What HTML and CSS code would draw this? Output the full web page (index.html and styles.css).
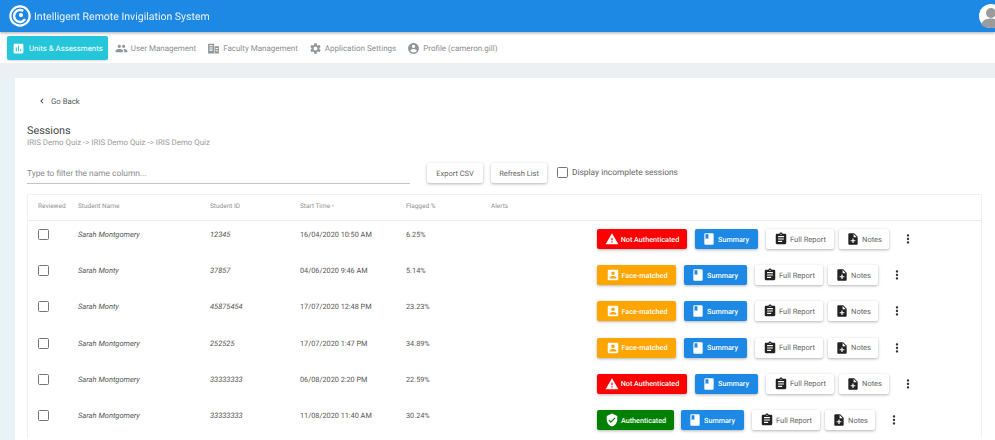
FILE: index.html
```html
<!DOCTYPE html>
<html lang="en">
<head>
<meta charset="utf-8">
<title>Sessions</title>
<link rel="stylesheet" href="styles.css">
</head>
<body>
<svg class="defs" width="0" height="0" aria-hidden="true">
  <symbol id="i-chart" viewBox="0 0 24 24"><path d="M19 3H5c-1.1 0-2 .9-2 2v14c0 1.1.9 2 2 2h14c1.1 0 2-.9 2-2V5c0-1.1-.9-2-2-2zM9 17H7v-7h2v7zm4 0h-2V7h2v10zm4 0h-2v-4h2v4z"/></symbol>
  <symbol id="i-people" viewBox="0 0 24 24"><path d="M16 11c1.66 0 2.99-1.34 2.99-3S17.66 5 16 5c-1.66 0-3 1.34-3 3s1.34 3 3 3zm-8 0c1.66 0 2.99-1.34 2.99-3S9.66 5 8 5C6.34 5 5 6.34 5 8s1.34 3 3 3zm0 2c-2.33 0-7 1.17-7 3.5V19h14v-2.5c0-2.33-4.67-3.5-7-3.5zm8 0c-.29 0-.62.02-.97.05 1.16.84 1.97 1.97 1.97 3.45V19h6v-2.5c0-2.33-4.67-3.5-7-3.5z"/></symbol>
  <symbol id="i-building" viewBox="0 0 24 24"><path d="M2 3h11v18H2V3zm2.500 3v2h6V6h-6zm0 4v2h6v-2h-6zm0 4v2h6v-2h-6zM14 8h8v13h-8V8zm2 3v2h4v-2h-4zm0 4v2h4v-2h-4z"/></symbol>
  <symbol id="i-gear" viewBox="0 0 24 24"><path d="M19.14 12.94c.04-.3.06-.61.06-.94 0-.32-.02-.64-.07-.94l2.03-1.58c.18-.14.23-.41.12-.61l-1.92-3.32c-.12-.22-.37-.29-.59-.22l-2.39.96c-.5-.38-1.03-.7-1.62-.94l-.36-2.54c-.04-.24-.24-.41-.48-.41h-3.84c-.24 0-.43.17-.47.41l-.36 2.54c-.59.24-1.13.57-1.62.94l-2.39-.96c-.22-.08-.47 0-.59.22L2.74 8.87c-.12.21-.08.47.12.61l2.03 1.58c-.05.3-.09.63-.09.94s.02.64.07.94l-2.03 1.58c-.18.14-.23.41-.12.61l1.92 3.32c.12.22.37.29.59.22l2.39-.96c.5.38 1.03.7 1.62.94l.36 2.54c.05.24.24.41.48.41h3.84c.24 0 .44-.17.47-.41l.36-2.54c.59-.24 1.13-.56 1.62-.94l2.39.96c.22.08.47 0 .59-.22l1.92-3.32c.12-.22.07-.47-.12-.61l-2.01-1.58zM12 15.600c-1.980 0-3.600-1.620-3.600-3.600s1.620-3.600 3.600-3.600 3.600 1.620 3.600 3.600-1.620 3.600-3.600 3.600z"/></symbol>
  <symbol id="i-account" viewBox="0 0 24 24"><path d="M12 2C6.480 2 2 6.480 2 12s4.480 10 10 10 10-4.480 10-10S17.520 2 12 2zm0 3c1.660 0 3 1.340 3 3s-1.340 3-3 3-3-1.340-3-3 1.340-3 3-3zm0 14.200c-2.500 0-4.710-1.280-6-3.220.03-1.990 4-3.080 6-3.080 1.990 0 5.970 1.090 6 3.080-1.290 1.940-3.500 3.220-6 3.220z"/></symbol>
  <symbol id="i-back" viewBox="0 0 24 24"><path d="M15.410 7.410L14 6l-6 6 6 6 1.410-1.410L10.830 12z"/></symbol>
  <symbol id="i-warn" viewBox="0 0 24 24"><path d="M1 21h22L12 2 1 21zm12-3h-2v-2h2v2zm0-4h-2v-4h2v4z"/></symbol>
  <symbol id="i-face" viewBox="0 0 24 24"><path d="M3 5v14c0 1.100.890 2 2 2h14c1.100 0 2-.9 2-2V5c0-1.100-.9-2-2-2H5c-1.110 0-2 .9-2 2zm12 4c0 1.660-1.340 3-3 3s-3-1.340-3-3 1.340-3 3-3 3 1.340 3 3zm-9 8c0-2 4-3.100 6-3.100s6 1.100 6 3.100v1H6v-1z"/></symbol>
  <symbol id="i-shield" viewBox="0 0 24 24"><path d="M12 1L3 5v6c0 5.550 3.840 10.740 9 12 5.160-1.260 9-6.450 9-12V5l-9-4zm-2 16l-4-4 1.410-1.410L10 14.170l6.590-6.590L18 9l-8 8z"/></symbol>
  <symbol id="i-book" viewBox="0 0 24 24"><path d="M18 2H6c-1.100 0-2 .9-2 2v16c0 1.100.9 2 2 2h12c1.100 0 2-.9 2-2V4c0-1.100-.9-2-2-2zM6 4h5v8l-2.500-1.500L6 12V4z"/></symbol>
  <symbol id="i-report" viewBox="0 0 24 24"><path d="M19 3h-4.180C14.400 1.840 13.300 1 12 1c-1.300 0-2.400.84-2.820 2H5c-1.100 0-2 .9-2 2v14c0 1.100.9 2 2 2h14c1.100 0 2-.9 2-2V5c0-1.100-.9-2-2-2zm-7 0c.55 0 1 .45 1 1s-.45 1-1 1-1-.45-1-1 .45-1 1-1zm2 14H7v-2h7v2zm3-4H7v-2h10v2zm0-4H7V7h10v2z"/></symbol>
  <symbol id="i-note" viewBox="0 0 24 24"><path d="M14 2H6c-1.100 0-1.990.9-1.990 2L4 20c0 1.100.890 2 1.990 2H18c1.100 0 2-.9 2-2V8l-6-6zm2 14h-3v3h-2v-3H8v-2h3v-3h2v3h3v2zm-3-7V3.500L18.500 9H13z"/></symbol>
  <symbol id="i-more" viewBox="0 0 24 24"><path d="M12 8c1.100 0 2-.9 2-2s-.9-2-2-2-2 .9-2 2 .9 2 2 2zm0 2c-1.100 0-2 .9-2 2s.9 2 2 2 2-.9 2-2-.9-2-2-2zm0 6c-1.100 0-2 .9-2 2s.9 2 2 2 2-.9 2-2-.9-2-2-2z"/></symbol>
</svg>

<header class="topbar">
  <svg class="logo" viewBox="0 0 24 24" aria-hidden="true">
    <circle cx="12" cy="12" r="10.500" class="logo-ring"/>
    <path d="M17.500 15.500A6.500 6.500 0 1 1 15.500 6.500" class="logo-arc"/>
    <circle cx="13" cy="11" r="2.300" class="logo-dot"/>
  </svg>
  <span class="brand">Intelligent Remote Invigilation System</span>
  <span class="avatar">
    <svg viewBox="0 0 24 24" aria-hidden="true">
      <circle cx="12" cy="12" r="12" class="avatar-bg"/>
      <circle cx="12" cy="9" r="5" class="avatar-fg"/>
      <path d="M2.500 21c0-4.500 5-6.500 9.500-6.500s9.500 2 9.500 6.500c-2 2-5.500 3-9.500 3s-7.500-1-9.500-3z" class="avatar-fg"/>
    </svg>
  </span>
</header>

<nav class="tabs">
  <a class="tab active"><svg class="ico"><use href="#i-chart"/></svg>Units &amp; Assessments</a>
  <a class="tab"><svg class="ico"><use href="#i-people"/></svg>User Management</a>
  <a class="tab"><svg class="ico"><use href="#i-building"/></svg>Faculty Management</a>
  <a class="tab"><svg class="ico"><use href="#i-gear"/></svg>Application Settings</a>
  <a class="tab"><svg class="ico"><use href="#i-account"/></svg>Profile (cameron.gill)</a>
</nav>

<main class="page">
  <section class="card">
    <a class="back"><svg class="back-ico"><use href="#i-back"/></svg>Go Back</a>
    <h1 class="title">Sessions</h1>
    <p class="crumbs">IRIS Demo Quiz -&gt; IRIS Demo Quiz -&gt; IRIS Demo Quiz</p>

    <div class="toolbar">
      <div class="filter">Type to filter the name column...</div>
      <button class="btn tool">Export CSV</button>
      <button class="btn tool">Refresh List</button>
      <label class="incomplete"><span class="box"></span>Display incomplete sessions</label>
    </div>

    <div class="table">
      <div class="row head">
        <span>Reviewed</span><span>Student Name</span><span>Student ID</span>
        <span>Start Time <i class="sort">^</i></span><span>Flagged %</span><span>Alerts</span>
      </div>

      <div class="row body">
        <span class="cell"><span class="box"></span></span><span class="cell it">Sarah Montgomery</span><span class="cell it">12345</span><span class="cell">16/04/2020 10:50 AM</span><span class="cell">6.25%</span><span></span>
        <div class="actions">
          <span class="btn st red"><svg class="bi"><use href="#i-warn"/></svg>Not Authenticated</span>
          <span class="btn st blue"><svg class="bi"><use href="#i-book"/></svg>Summary</span>
          <span class="btn rep"><svg class="bi"><use href="#i-report"/></svg>Full Report</span>
          <span class="btn nts"><svg class="bi"><use href="#i-note"/></svg>Notes</span>
          <svg class="more"><use href="#i-more"/></svg>
        </div>
      </div>

      <div class="row body">
        <span class="cell"><span class="box"></span></span><span class="cell it">Sarah Monty</span><span class="cell it">37857</span><span class="cell">04/06/2020 9:46 AM</span><span class="cell">5.14%</span><span></span>
        <div class="actions">
          <span class="btn st amber"><svg class="bi"><use href="#i-face"/></svg>Face-matched</span>
          <span class="btn st blue"><svg class="bi"><use href="#i-book"/></svg>Summary</span>
          <span class="btn rep"><svg class="bi"><use href="#i-report"/></svg>Full Report</span>
          <span class="btn nts"><svg class="bi"><use href="#i-note"/></svg>Notes</span>
          <svg class="more"><use href="#i-more"/></svg>
        </div>
      </div>

      <div class="row body">
        <span class="cell"><span class="box"></span></span><span class="cell it">Sarah Monty</span><span class="cell it">45875454</span><span class="cell">17/07/2020 12:48 PM</span><span class="cell">23.23%</span><span></span>
        <div class="actions">
          <span class="btn st amber"><svg class="bi"><use href="#i-face"/></svg>Face-matched</span>
          <span class="btn st blue"><svg class="bi"><use href="#i-book"/></svg>Summary</span>
          <span class="btn rep"><svg class="bi"><use href="#i-report"/></svg>Full Report</span>
          <span class="btn nts"><svg class="bi"><use href="#i-note"/></svg>Notes</span>
          <svg class="more"><use href="#i-more"/></svg>
        </div>
      </div>

      <div class="row body">
        <span class="cell"><span class="box"></span></span><span class="cell it">Sarah Montgomery</span><span class="cell it">252525</span><span class="cell">17/07/2020 1:47 PM</span><span class="cell">34.89%</span><span></span>
        <div class="actions">
          <span class="btn st amber"><svg class="bi"><use href="#i-face"/></svg>Face-matched</span>
          <span class="btn st blue"><svg class="bi"><use href="#i-book"/></svg>Summary</span>
          <span class="btn rep"><svg class="bi"><use href="#i-report"/></svg>Full Report</span>
          <span class="btn nts"><svg class="bi"><use href="#i-note"/></svg>Notes</span>
          <svg class="more"><use href="#i-more"/></svg>
        </div>
      </div>

      <div class="row body">
        <span class="cell"><span class="box"></span></span><span class="cell it">Sarah Montgomery</span><span class="cell it">33333333</span><span class="cell">06/08/2020 2:20 PM</span><span class="cell">22.59%</span><span></span>
        <div class="actions">
          <span class="btn st red"><svg class="bi"><use href="#i-warn"/></svg>Not Authenticated</span>
          <span class="btn st blue"><svg class="bi"><use href="#i-book"/></svg>Summary</span>
          <span class="btn rep"><svg class="bi"><use href="#i-report"/></svg>Full Report</span>
          <span class="btn nts"><svg class="bi"><use href="#i-note"/></svg>Notes</span>
          <svg class="more"><use href="#i-more"/></svg>
        </div>
      </div>

      <div class="row body">
        <span class="cell"><span class="box"></span></span><span class="cell it">Sarah Montgomery</span><span class="cell it">33333333</span><span class="cell">11/08/2020 11:40 AM</span><span class="cell">30.24%</span><span></span>
        <div class="actions">
          <span class="btn st green"><svg class="bi"><use href="#i-shield"/></svg>Authenticated</span>
          <span class="btn st blue"><svg class="bi"><use href="#i-book"/></svg>Summary</span>
          <span class="btn rep"><svg class="bi"><use href="#i-report"/></svg>Full Report</span>
          <span class="btn nts"><svg class="bi"><use href="#i-note"/></svg>Notes</span>
          <svg class="more"><use href="#i-more"/></svg>
        </div>
      </div>
    </div>
  </section>
</main>
</body>
</html>
```

FILE: styles.css
```css
html, body { margin: 0; height: 440px; overflow: hidden; }
body { font-family: Roboto, "Liberation Sans", sans-serif; background: #fff; color: #444; text-rendering: geometricPrecision; filter: blur(.3px); }
.defs { position: absolute; }

.topbar { height: 32px; background: #1e88e5; display: flex; align-items: center; padding-left: 9px; box-shadow: 0 1px 3px rgba(0,0,0,.35); position: relative; z-index: 2; }
.logo { width: 22px; height: 22px; margin-right: 3px; flex: none; }
.logo-ring { fill: none; stroke: #fff; stroke-width: 2.4; }
.logo-arc { fill: none; stroke: #fff; stroke-width: 2.6; }
.logo-dot { fill: #fff; }
.brand { color: #eaf3fc; font-size: 10.500px; white-space: nowrap; }
.avatar { margin-left: auto; margin-right: -8px; width: 24px; height: 24px; flex: none; }
.avatar svg { width: 24px; height: 24px; display: block; }
.avatar-bg { fill: #fff; }
.avatar-fg { fill: #9b9b9b; }

.tabs { height: 30px; background: #fff; display: flex; align-items: center; padding: 1px 0 0 7px; }
.tab { display: flex; align-items: center; font-size: 8px; color: #8a8f93; height: 24px; padding: 0 5px 0 6px; white-space: nowrap; }
.tab .ico { width: 13px; height: 13px; margin-right: 3px; fill: #90979c; flex: none; }
.tab.active { background: #26c6da; color: #fff; font-size: 7.800px; border-radius: 2px; padding: 0 5px; box-shadow: 0 1px 2px rgba(0,0,0,.15); margin-right: 1px; }
.tab.active .ico { fill: #fff; margin-right: 4px; }

.page { background: linear-gradient(#ecf0f3 0, #ecf0f3 15px, #e8f3f8 15px); padding: 15px 0 0 15px; height: 377px; }
.card { background: #fff; height: 400px; padding: 17px 13px 0 12px; }

.back { display: flex; align-items: center; font-size: 7.800px; color: #555; height: 12px; padding-left: 10px; }
.back-ico { width: 10px; height: 10px; fill: #333; margin-right: 4px; flex: none; }
.title { font-weight: 400; font-size: 10.800px; line-height: 14px; color: #444; margin: 17px 0 0; }
.crumbs { font-size: 7.900px; line-height: 10px; color: #9a9a9a; margin: 0; }

.toolbar { display: flex; align-items: flex-start; margin-top: 15px; }
.filter { width: 383px; height: 21px; padding-top: 2px; line-height: 19px; box-sizing: border-box; border-bottom: 1px solid #c4c4c4; font-size: 8.400px; color: #8b8b8b; margin-right: 17px; }
.btn { display: inline-flex; align-items: center; justify-content: center; box-sizing: border-box; height: 20px; font-family: inherit; font-size: 7.500px; border: 0; border-radius: 2px; background: #fff; color: #666; box-shadow: 0 1px 3px rgba(0,0,0,.3); white-space: nowrap; padding: 0; text-rendering: geometricPrecision; }
.tool { width: 56px; margin-right: 8px; }
.incomplete { display: flex; align-items: center; height: 19px; font-size: 8.400px; color: #666; margin-left: 2px; white-space: nowrap; }
.box { display: block; width: 9px; height: 9px; border: 1.200px solid #777; border-radius: 1.500px; margin-right: 4px; }

.table { width: 955px; margin-top: 10px; border: 1px solid #f1f1f1; border-bottom: 0; box-sizing: border-box; }
.row { display: grid; grid-template-columns: 50px 132px 90px 106px 85px 106px 1fr; }
.row > span:first-child { padding-left: 10px; }
.head { box-sizing: content-box; height: 21px; padding-bottom: 4px; align-items: center; font-size: 6.500px; color: #8f8f8f; border-bottom: 1px solid #ececec; }
.sort { font-style: normal; font-size: 5px; }
.body { height: 36.200px; align-items: center; font-size: 7.300px; color: #555; }
.cell { padding-bottom: 9px; }
.it { font-style: italic; font-size: 7.500px; }

.actions { display: flex; align-items: center; }
.bi { width: 14px; height: 14px; margin-right: 2px; flex: none; }
.st { color: #fff; font-weight: 500; font-size: 7.200px; }
.st .bi { fill: #fff; }
.red { background: #ff0000; width: 90px; margin-right: 8px; }
.amber { background: #ffa500; width: 79px; margin-right: 8px; }
.green { background: #008000; width: 77px; margin-right: 7px; }
.blue { background: #1e88e5; width: 63px; margin-right: 8px; padding-right: 2px; }
.rep { width: 68px; margin-right: 5px; }
.nts { width: 50px; }
.rep .bi, .nts .bi { fill: #222; }
.more { width: 14px; height: 14px; fill: #333; margin-left: 12px; }
```
